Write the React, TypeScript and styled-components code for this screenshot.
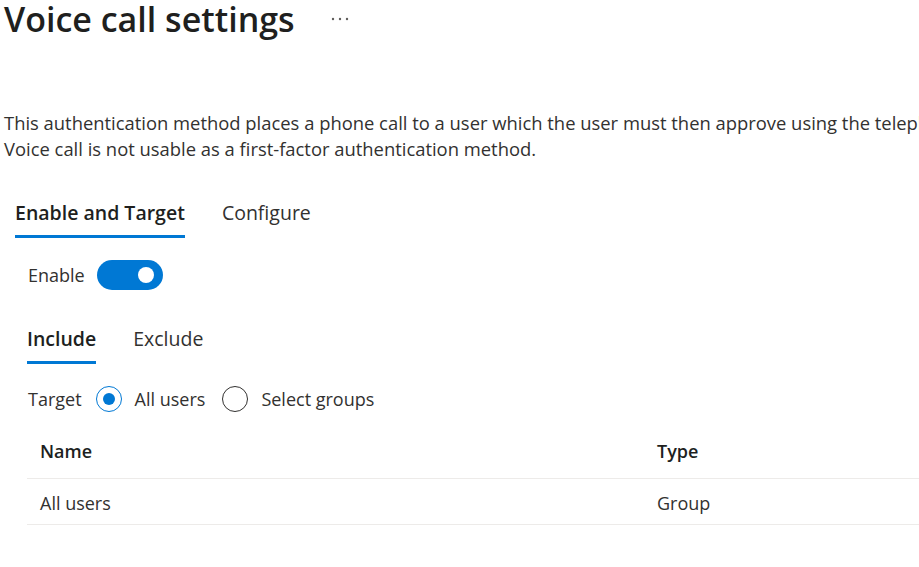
import React, { useState } from "react";
import styled, { createGlobalStyle } from "styled-components";

const FONT = `"Open Sans", "Noto Sans", sans-serif`;

const Global = createGlobalStyle`
  html, body { margin: 0; padding: 0; background: #ffffff; }
  body { font-family: ${FONT}; color: #323130; -webkit-font-smoothing: antialiased; }
  * { box-sizing: border-box; }
`;

const Page = styled.div`
  width: 919px;
  height: 567px;
  overflow: hidden;
  padding-left: 4px;
  display: flex;
  flex-direction: column;
`;

const TitleRow = styled.div`
  display: flex;
  align-items: center;
  height: 38px;
  gap: 36px;
`;

const Title = styled.h1`
  margin: 0;
  font-size: 34px;
  line-height: 38px;
  font-weight: 600;
  color: #201f1e;
  white-space: nowrap;
`;

const MoreButton = styled.button`
  border: 0;
  background: transparent;
  padding: 0;
  display: flex;
  align-items: center;
  height: 20px;
  color: #605e5c;
`;

const Description = styled.p`
  margin: 72px 0 0 0;
  font-size: 18.4px;
  line-height: 26px;
  white-space: nowrap;
  color: #323130;
`;

const Section = styled.div<{ $indent: number; $top: number }>`
  margin-top: ${(p) => p.$top}px;
  padding-left: ${(p) => p.$indent}px;
  display: flex;
`;

const TabList = styled.div`
  display: flex;
  gap: 37px;
`;

const Tab = styled.div<{ $active?: boolean }>`
  font-size: 19.5px;
  line-height: 24px;
  padding-bottom: 10px;
  border-bottom: 3px solid ${(p) => (p.$active ? "#0078d4" : "transparent")};
  font-weight: ${(p) => (p.$active ? 600 : 400)};
  color: ${(p) => (p.$active ? "#201f1e" : "#323130")};
  white-space: nowrap;
  cursor: pointer;
`;

const FieldRow = styled.div`
  display: flex;
  align-items: center;
`;

const Label = styled.span<{ $gap: number }>`
  font-size: 18px;
  line-height: 24px;
  margin-right: ${(p) => p.$gap}px;
  white-space: nowrap;
`;

const Toggle = styled.button<{ $on: boolean }>`
  width: 66px;
  height: 30px;
  border-radius: 15px;
  border: 0;
  padding: 0 9px;
  display: flex;
  align-items: center;
  justify-content: ${(p) => (p.$on ? "flex-end" : "flex-start")};
  background: ${(p) => (p.$on ? "#0078d4" : "#ffffff")};
  cursor: pointer;
`;

const Knob = styled.span`
  width: 16px;
  height: 16px;
  border-radius: 50%;
  background: #ffffff;
`;

const RadioCircle = styled.span<{ $checked: boolean }>`
  width: 26px;
  height: 26px;
  border-radius: 50%;
  border: 1.5px solid ${(p) => (p.$checked ? "#0078d4" : "#323130")};
  display: flex;
  align-items: center;
  justify-content: center;
  margin-right: 13px;
  &::after {
    content: "";
    width: 12px;
    height: 12px;
    border-radius: 50%;
    background: ${(p) => (p.$checked ? "#0078d4" : "transparent")};
  }
`;

const RadioOption = styled.label<{ $gap: number }>`
  display: flex;
  align-items: center;
  font-size: 18px;
  line-height: 24px;
  margin-right: ${(p) => p.$gap}px;
  cursor: pointer;
  white-space: nowrap;
`;

const Table = styled.div`
  margin-top: 16px;
  margin-left: 23px;
  margin-right: -40px;
  display: flex;
  flex-direction: column;
`;

const TableRow = styled.div<{ $head?: boolean }>`
  display: grid;
  grid-template-columns: 617px 1fr;
  border-bottom: 1px solid #edebe9;
  padding: ${(p) => (p.$head ? "11px 0 15px" : "12px 0 9px")};
`;

const Cell = styled.div<{ $head?: boolean }>`
  padding-left: 13px;
  font-size: 18px;
  line-height: 24px;
  font-weight: ${(p) => (p.$head ? 600 : 400)};
  color: ${(p) => (p.$head ? "#201f1e" : "#323130")};
`;

export default function App() {
  const [enabled, setEnabled] = useState(true);
  const [target, setTarget] = useState("all");
  return (
    <>
      <Global />
      <Page>
        <TitleRow>
          <Title>Voice call settings</Title>
          <MoreButton aria-label="More">
            <svg width="18" height="4" viewBox="0 0 18 4">
              <circle cx="2" cy="2" r="1.2" fill="#605e5c" />
              <circle cx="9" cy="2" r="1.2" fill="#605e5c" />
              <circle cx="16" cy="2" r="1.2" fill="#605e5c" />
            </svg>
          </MoreButton>
        </TitleRow>
        <Description>
          This authentication method places a phone call to a user which the user must then approve using the telephone keypad.
          <br />
          Voice call is not usable as a first-factor authentication method.
        </Description>
        <Section $indent={11} $top={39}>
          <TabList>
            <Tab $active>Enable and Target</Tab>
            <Tab>Configure</Tab>
          </TabList>
        </Section>
        <Section $indent={24} $top={22}>
          <FieldRow>
            <Label $gap={12}>Enable</Label>
            <Toggle $on={enabled} onClick={() => setEnabled(!enabled)} aria-label="Enable">
              <Knob />
            </Toggle>
          </FieldRow>
        </Section>
        <Section $indent={23} $top={37}>
          <TabList>
            <Tab $active>Include</Tab>
            <Tab>Exclude</Tab>
          </TabList>
        </Section>
        <Section $indent={24} $top={22}>
          <FieldRow>
            <Label $gap={14}>Target</Label>
            <RadioOption $gap={17} onClick={() => setTarget("all")}>
              <RadioCircle $checked={target === "all"} />
              All users
            </RadioOption>
            <RadioOption $gap={0} onClick={() => setTarget("groups")}>
              <RadioCircle $checked={target === "groups"} />
              Select groups
            </RadioOption>
          </FieldRow>
        </Section>
        <Table>
          <TableRow $head>
            <Cell $head>Name</Cell>
            <Cell $head>Type</Cell>
          </TableRow>
          <TableRow>
            <Cell>All users</Cell>
            <Cell>Group</Cell>
          </TableRow>
        </Table>
      </Page>
    </>
  );
}
